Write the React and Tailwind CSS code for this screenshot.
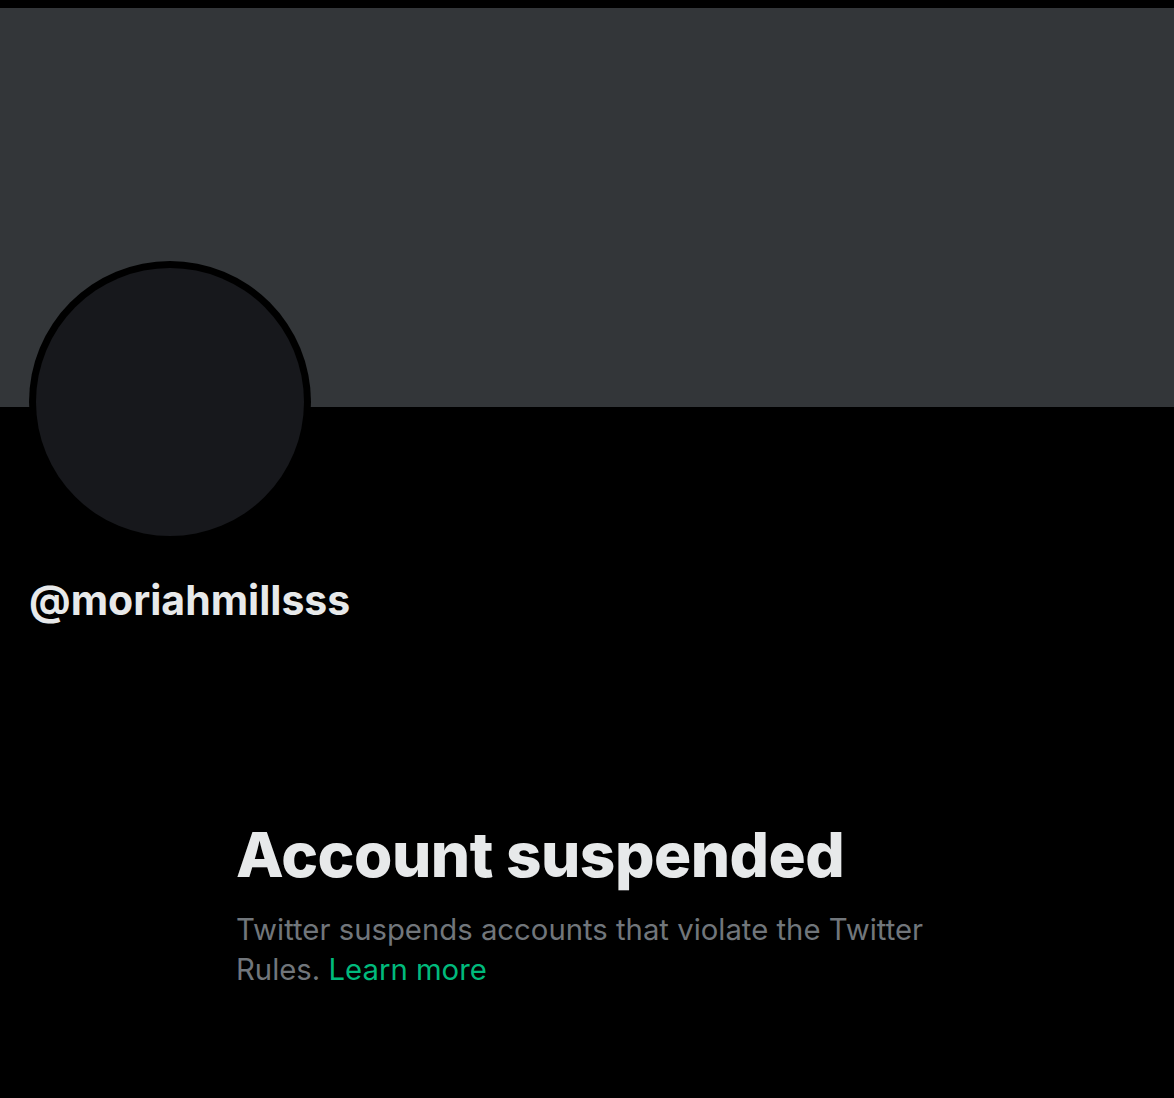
export default function App() {
    return (
        <div className="min-h-screen w-full bg-black font-['Inter',sans-serif] overflow-hidden h-[1098px]">
            {/* bande du haut */}
            <div className="h-[8px] bg-black" />

            {/* bannière */}
            <div className="h-[399px] bg-[#333639]" />

            {/* avatar + pseudo */}
            <div className="px-[29px]">
                <div className="-mt-[146px] w-[282px] h-[282px] rounded-full bg-black p-[7px]">
                    <div className="w-full h-full rounded-full bg-[#17181c]" />
                </div>
                <p className="mt-[33px] text-[41px] leading-[48px] font-bold text-[#e7e9ea]">
                    @moriahmillsss
                </p>
            </div>

            {/* message de suspension */}
            <div className="ml-[236px] mt-[195px] w-[700px]">
                <h1 className="text-[62px] leading-[72px] font-extrabold text-[#e7e9ea] tracking-[-0.5px]">
                    Account suspended
                </h1>
                <p className="mt-[19px] text-[29.3px] leading-[40px] text-[#71767b]">
                    Twitter suspends accounts that violate the Twitter Rules.{" "}
                    <a href="#" className="text-[#00ba7c]">
                        Learn more
                    </a>
                </p>
            </div>
        </div>
    );
}
